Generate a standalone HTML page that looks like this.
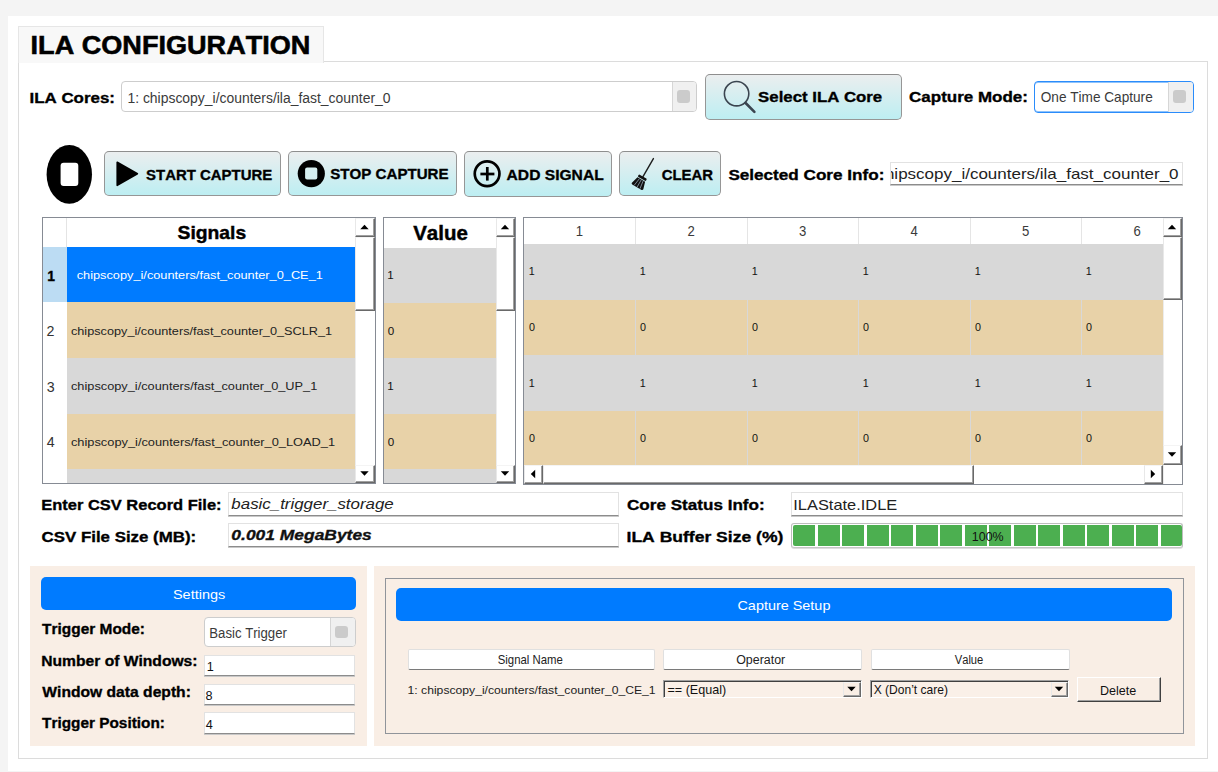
<!DOCTYPE html>
<html><head><meta charset="utf-8"><title>ILA Configuration</title>
<style>
html,body{margin:0;padding:0;}
body{width:1218px;height:772px;position:relative;overflow:hidden;background:#f4f4f4;font-family:"Liberation Sans",sans-serif;}
svg text{font-family:"Liberation Sans",sans-serif;font-kerning:none;white-space:pre;}
</style></head><body>
<div style="position:absolute;left:8px;top:16px;width:1210px;height:755px;background:#fff"></div>
<div style="position:absolute;left:18px;top:61px;width:1190px;height:698px;border:1px solid #dcdcdc;box-sizing:border-box"></div>
<div style="position:absolute;left:18px;top:26px;width:306px;height:37px;background:#f8f8f8;border:1px solid #e6e6e6;border-bottom:none;box-sizing:border-box"></div>
<div style="position:absolute;left:121px;top:81px;width:576px;height:31px;background:#fff;border:1px solid #cdcdcd;border-radius:4px;box-sizing:border-box;overflow:hidden"></div>
<div style="position:absolute;left:672px;top:82px;width:24px;height:29px;background:#f0f0f0;border-left:1px solid #d6d6d6;border-radius:0 3px 3px 0;box-sizing:border-box"></div>
<div style="position:absolute;left:677px;top:90px;width:13px;height:13px;background:#cbcbcb;border-radius:3px"></div>
<div style="position:absolute;left:705px;top:74px;width:197px;height:46px;background:linear-gradient(#ebeeef,#bdeef2);border:1px solid #969696;border-top-color:#8e8e8e;border-radius:5px;box-sizing:border-box"></div>
<svg style="position:absolute;left:0;top:0" width="1218" height="200"><circle cx="736.6" cy="93.7" r="12.2" fill="none" stroke="#3b4550" stroke-width="1.6"/><line x1="745.6" y1="103" x2="754.4" y2="111.8" stroke="#3b4550" stroke-width="2.6" stroke-linecap="round"/></svg>
<div style="position:absolute;left:1034px;top:81px;width:160px;height:32px;background:#fff;border:1px solid #2a8cfb;box-shadow:inset 0 1px 0 #8fc3fb,inset 0 -1px 0 #8fc3fb;border-radius:4px;box-sizing:border-box;overflow:hidden"></div>
<div style="position:absolute;left:1168px;top:82px;width:25px;height:30px;background:#f0f0f0;border-left:1px solid #d6d6d6;border-radius:0 3px 3px 0;box-sizing:border-box"></div>
<div style="position:absolute;left:1173px;top:90px;width:13px;height:13px;background:#cbcbcb;border-radius:3px"></div>
<svg style="position:absolute;left:0;top:0" width="1218" height="210">
<ellipse cx="69.3" cy="174.4" rx="22.7" ry="29.3" fill="#000"/>
<rect x="60.6" y="162.7" width="17.7" height="23.3" rx="3" fill="#fff"/>
</svg>
<div style="position:absolute;left:104px;top:151px;width:177px;height:45px;background:linear-gradient(#ebeeef,#bdeef2);border:1px solid #969696;border-top-color:#8e8e8e;border-radius:5px;box-sizing:border-box"></div>
<div style="position:absolute;left:288px;top:151px;width:169px;height:45px;background:linear-gradient(#ebeeef,#bdeef2);border:1px solid #969696;border-top-color:#8e8e8e;border-radius:5px;box-sizing:border-box"></div>
<div style="position:absolute;left:464px;top:151px;width:148px;height:46px;background:linear-gradient(#ebeeef,#bdeef2);border:1px solid #969696;border-top-color:#8e8e8e;border-radius:5px;box-sizing:border-box"></div>
<div style="position:absolute;left:619px;top:151px;width:102px;height:45px;background:linear-gradient(#ebeeef,#bdeef2);border:1px solid #969696;border-top-color:#8e8e8e;border-radius:5px;box-sizing:border-box"></div>
<svg style="position:absolute;left:0;top:0" width="1218" height="210">
<path d="M117.2 162.2 L137.4 173.7 L117.2 185.3 Z" fill="#000" stroke="#000" stroke-width="1.6" stroke-linejoin="round"/>
<circle cx="311.3" cy="173.6" r="13.6" fill="#000"/>
<rect x="305.1" y="167.4" width="12.2" height="12.2" rx="2" fill="#d6eef0"/>
<circle cx="487.1" cy="173.75" r="12.35" fill="none" stroke="#000" stroke-width="2.7"/>
<line x1="480.4" y1="174" x2="494.4" y2="174" stroke="#000" stroke-width="2.7"/>
<line x1="487.3" y1="167" x2="487.3" y2="180.6" stroke="#000" stroke-width="2.7"/>
<g transform="translate(642.2 178) rotate(30)">
<line x1="0" y1="-22.4" x2="0" y2="-1" stroke="#1e1e1e" stroke-width="1.4" stroke-linecap="round"/>
<rect x="-4.6" y="-1.6" width="9.2" height="2.6" rx="0.8" fill="#111"/>
<path d="M-4.4 1.8 L4.4 1.8 L6.6 9.2 Q6.6 10.6 5.4 10.6 L-5.4 10.6 Q-6.6 10.6 -6.6 9.2 Z" fill="#111"/>
<path d="M-2.1 2.2 L-3.3 10.4 M0.1 2.2 L0.1 10.4 M2.3 2.2 L3.4 10.4" stroke="#9ab" stroke-width="0.7"/>
</g>
</svg>
<div style="position:absolute;left:890px;top:162px;width:293px;height:23px;background:#fff;border:1px solid #e2e2e2;border-bottom:1px solid #8c8c8c;box-sizing:border-box;box-shadow:0 1px 0 #c8c8c8"></div>
<div style="position:absolute;left:42px;top:217px;width:334px;height:267px;border:1px solid #868b94;background:#fff;box-sizing:border-box"></div>
<div style="position:absolute;left:66px;top:218px;width:1px;height:29px;background:#e4e4e4"></div>
<div style="position:absolute;left:67px;top:247px;width:288px;height:55px;background:#007bff"></div>
<div style="position:absolute;left:67px;top:302px;width:288px;height:56px;background:#e8d2a8"></div>
<div style="position:absolute;left:67px;top:358px;width:288px;height:56px;background:#d8d8d8"></div>
<div style="position:absolute;left:67px;top:414px;width:288px;height:55px;background:#e8d2a8"></div>
<div style="position:absolute;left:67px;top:469px;width:288px;height:14px;background:#d8d8d8"></div>
<div style="position:absolute;left:43px;top:247px;width:24px;height:55px;background:#bcdcf3"></div>
<div style="position:absolute;left:355px;top:218px;width:1px;height:265px;background:#ececec"></div>
<div style="position:absolute;left:355px;top:218px;width:20px;height:19px;background:#fff;border-left:1px solid #e8e8e8;border-top:1px solid #f4f4f4;border-right:1px solid #696969;border-bottom:1px solid #696969;box-shadow:inset -1px -1px 0 #a0a0a0;box-sizing:border-box"></div>
<div style="position:absolute;left:355px;top:237px;width:20px;height:74px;background:#fff;border-left:1px solid #e8e8e8;border-top:1px solid #f4f4f4;border-right:1px solid #696969;border-bottom:1px solid #696969;box-shadow:inset -1px -1px 0 #a0a0a0;box-sizing:border-box"></div>
<div style="position:absolute;left:355px;top:465px;width:20px;height:18px;background:#fff;border-left:1px solid #e8e8e8;border-top:1px solid #f4f4f4;border-right:1px solid #696969;border-bottom:1px solid #696969;box-shadow:inset -1px -1px 0 #a0a0a0;box-sizing:border-box"></div>
<div style="position:absolute;left:383px;top:217px;width:133px;height:267px;border:1px solid #868b94;background:#fff;box-sizing:border-box"></div>
<div style="position:absolute;left:384px;top:248px;width:112px;height:55px;background:#d8d8d8"></div>
<div style="position:absolute;left:384px;top:303px;width:112px;height:55px;background:#e8d2a8"></div>
<div style="position:absolute;left:384px;top:358px;width:112px;height:56px;background:#d8d8d8"></div>
<div style="position:absolute;left:384px;top:414px;width:112px;height:55px;background:#e8d2a8"></div>
<div style="position:absolute;left:384px;top:469px;width:112px;height:14px;background:#d8d8d8"></div>
<div style="position:absolute;left:496px;top:218px;width:1px;height:265px;background:#ececec"></div>
<div style="position:absolute;left:496px;top:218px;width:19px;height:19px;background:#fff;border-left:1px solid #e8e8e8;border-top:1px solid #f4f4f4;border-right:1px solid #696969;border-bottom:1px solid #696969;box-shadow:inset -1px -1px 0 #a0a0a0;box-sizing:border-box"></div>
<div style="position:absolute;left:496px;top:237px;width:19px;height:74px;background:#fff;border-left:1px solid #e8e8e8;border-top:1px solid #f4f4f4;border-right:1px solid #696969;border-bottom:1px solid #696969;box-shadow:inset -1px -1px 0 #a0a0a0;box-sizing:border-box"></div>
<div style="position:absolute;left:496px;top:465px;width:19px;height:18px;background:#fff;border-left:1px solid #e8e8e8;border-top:1px solid #f4f4f4;border-right:1px solid #696969;border-bottom:1px solid #696969;box-shadow:inset -1px -1px 0 #a0a0a0;box-sizing:border-box"></div>
<div style="position:absolute;left:523px;top:217px;width:660px;height:268px;border:1px solid #868b94;background:#fff;box-sizing:border-box"></div>
<div style="position:absolute;left:524px;top:244px;width:639px;height:56px;background:#d8d8d8"></div>
<div style="position:absolute;left:524px;top:300px;width:639px;height:55px;background:#e8d2a8"></div>
<div style="position:absolute;left:524px;top:355px;width:639px;height:56px;background:#d8d8d8"></div>
<div style="position:absolute;left:524px;top:411px;width:639px;height:54px;background:#e8d2a8"></div>
<div style="position:absolute;left:635px;top:218px;width:1px;height:26px;background:#e5e5e5"></div>
<div style="position:absolute;left:635px;top:244px;width:1px;height:221px;background:#d8d8d8"></div>
<div style="position:absolute;left:747px;top:218px;width:1px;height:26px;background:#e5e5e5"></div>
<div style="position:absolute;left:747px;top:244px;width:1px;height:221px;background:#d8d8d8"></div>
<div style="position:absolute;left:858px;top:218px;width:1px;height:26px;background:#e5e5e5"></div>
<div style="position:absolute;left:858px;top:244px;width:1px;height:221px;background:#d8d8d8"></div>
<div style="position:absolute;left:970px;top:218px;width:1px;height:26px;background:#e5e5e5"></div>
<div style="position:absolute;left:970px;top:244px;width:1px;height:221px;background:#d8d8d8"></div>
<div style="position:absolute;left:1081px;top:218px;width:1px;height:26px;background:#e5e5e5"></div>
<div style="position:absolute;left:1081px;top:244px;width:1px;height:221px;background:#d8d8d8"></div>
<div style="position:absolute;left:1163px;top:218px;width:1px;height:247px;background:#ececec"></div>
<div style="position:absolute;left:1163px;top:218px;width:19px;height:19px;background:#fff;border-left:1px solid #e8e8e8;border-top:1px solid #f4f4f4;border-right:1px solid #696969;border-bottom:1px solid #696969;box-shadow:inset -1px -1px 0 #a0a0a0;box-sizing:border-box"></div>
<div style="position:absolute;left:1163px;top:237px;width:19px;height:63px;background:#fff;border-left:1px solid #e8e8e8;border-top:1px solid #f4f4f4;border-right:1px solid #696969;border-bottom:1px solid #696969;box-shadow:inset -1px -1px 0 #a0a0a0;box-sizing:border-box"></div>
<div style="position:absolute;left:1163px;top:445px;width:19px;height:20px;background:#fff;border-left:1px solid #e8e8e8;border-top:1px solid #f4f4f4;border-right:1px solid #696969;border-bottom:1px solid #696969;box-shadow:inset -1px -1px 0 #a0a0a0;box-sizing:border-box"></div>
<div style="position:absolute;left:524px;top:465px;width:639px;height:19px;background:#fff"></div>
<div style="position:absolute;left:524px;top:465px;width:19px;height:19px;background:#fff;border-left:1px solid #e8e8e8;border-top:1px solid #f4f4f4;border-right:1px solid #696969;border-bottom:1px solid #696969;box-shadow:inset -1px -1px 0 #a0a0a0;box-sizing:border-box"></div>
<div style="position:absolute;left:543px;top:465px;width:431px;height:19px;background:#fff;border-left:1px solid #e8e8e8;border-top:1px solid #f4f4f4;border-right:1px solid #696969;border-bottom:1px solid #696969;box-shadow:inset -1px -1px 0 #a0a0a0;box-sizing:border-box"></div>
<div style="position:absolute;left:1144px;top:465px;width:19px;height:19px;background:#fff;border-left:1px solid #e8e8e8;border-top:1px solid #f4f4f4;border-right:1px solid #696969;border-bottom:1px solid #696969;box-shadow:inset -1px -1px 0 #a0a0a0;box-sizing:border-box"></div>
<div style="position:absolute;left:1163px;top:465px;width:19px;height:19px;background:#fff;border-left:1px solid #ececec;box-sizing:border-box"></div>
<div style="position:absolute;left:228px;top:492px;width:391px;height:24px;background:#fff;border:1px solid #e2e2e2;border-bottom:1px solid #8c8c8c;box-sizing:border-box;box-shadow:0 1px 0 #c8c8c8"></div>
<div style="position:absolute;left:228px;top:523px;width:391px;height:24px;background:#fff;border:1px solid #e2e2e2;border-bottom:1px solid #8c8c8c;box-sizing:border-box;box-shadow:0 1px 0 #c8c8c8"></div>
<div style="position:absolute;left:791px;top:492px;width:392px;height:24px;background:#fff;border:1px solid #e2e2e2;border-bottom:1px solid #8c8c8c;box-sizing:border-box;box-shadow:0 1px 0 #c8c8c8"></div>
<div style="position:absolute;left:791px;top:523px;width:392px;height:25px;background:#fff;border:1px solid #bdbdbd;border-bottom-color:#c6c6c6;border-radius:3px;box-sizing:border-box;box-shadow:0 1px 0 #dedede"></div>
<div style="position:absolute;left:793.0px;top:525px;width:22.100000000000023px;height:21px;background:#4caf50;border-radius:2px 0 0 2px"></div>
<div style="position:absolute;left:817.5px;top:525px;width:22.100000000000023px;height:21px;background:#4caf50"></div>
<div style="position:absolute;left:842.1px;top:525px;width:22.100000000000023px;height:21px;background:#4caf50"></div>
<div style="position:absolute;left:866.6px;top:525px;width:22.100000000000023px;height:21px;background:#4caf50"></div>
<div style="position:absolute;left:891.1px;top:525px;width:22.100000000000023px;height:21px;background:#4caf50"></div>
<div style="position:absolute;left:915.6px;top:525px;width:22.199999999999932px;height:21px;background:#4caf50"></div>
<div style="position:absolute;left:940.2px;top:525px;width:22.09999999999991px;height:21px;background:#4caf50"></div>
<div style="position:absolute;left:964.7px;top:525px;width:22.09999999999991px;height:21px;background:#4caf50"></div>
<div style="position:absolute;left:989.2px;top:525px;width:22.09999999999991px;height:21px;background:#4caf50"></div>
<div style="position:absolute;left:1013.8px;top:525px;width:22.100000000000136px;height:21px;background:#4caf50"></div>
<div style="position:absolute;left:1038.3px;top:525px;width:22.100000000000136px;height:21px;background:#4caf50"></div>
<div style="position:absolute;left:1062.8px;top:525px;width:22.100000000000136px;height:21px;background:#4caf50"></div>
<div style="position:absolute;left:1087.4px;top:525px;width:22.09999999999991px;height:21px;background:#4caf50"></div>
<div style="position:absolute;left:1111.9px;top:525px;width:22.09999999999991px;height:21px;background:#4caf50"></div>
<div style="position:absolute;left:1136.4px;top:525px;width:22.09999999999991px;height:21px;background:#4caf50"></div>
<div style="position:absolute;left:1161.0px;top:525px;width:21.0px;height:21px;background:#4caf50;border-radius:0 2px 2px 0"></div>
<div style="position:absolute;left:30px;top:566px;width:337px;height:180px;background:#f9eee5"></div>
<div style="position:absolute;left:374px;top:566px;width:821px;height:180px;background:#f9eee5"></div>
<div style="position:absolute;left:41px;top:577px;width:315px;height:33px;background:#007bff;border-radius:5px"></div>
<div style="position:absolute;left:203.5px;top:617px;width:152.0px;height:30px;background:#fff;border:1px solid #cdcdcd;border-radius:4px;box-sizing:border-box;overflow:hidden"></div>
<div style="position:absolute;left:329.5px;top:618px;width:25.0px;height:28px;background:#f0f0f0;border-left:1px solid #d6d6d6;border-radius:0 3px 3px 0;box-sizing:border-box"></div>
<div style="position:absolute;left:334.8px;top:625.6px;width:13.199999999999989px;height:12.899999999999977px;background:#cbcbcb;border-radius:3px"></div>
<div style="position:absolute;left:204px;top:655px;width:151px;height:21px;background:#fff;border:1px solid #e2e2e2;border-bottom:1px solid #8c8c8c;box-sizing:border-box;box-shadow:0 1px 0 #c8c8c8"></div>
<div style="position:absolute;left:204px;top:684px;width:151px;height:21px;background:#fff;border:1px solid #e2e2e2;border-bottom:1px solid #8c8c8c;box-sizing:border-box;box-shadow:0 1px 0 #c8c8c8"></div>
<div style="position:absolute;left:204px;top:712px;width:151px;height:22px;background:#fff;border:1px solid #e2e2e2;border-bottom:1px solid #8c8c8c;box-sizing:border-box;box-shadow:0 1px 0 #c8c8c8"></div>
<div style="position:absolute;left:385px;top:578px;width:799px;height:156px;border:1px solid #90949a;box-sizing:border-box"></div>
<div style="position:absolute;left:396px;top:588px;width:776px;height:33px;background:#007bff;border-radius:5px"></div>
<div style="position:absolute;left:408px;top:649px;width:247px;height:21px;background:#fff;border:1px solid #e0e0e0;border-bottom:1px solid #7a7a7a;border-radius:2px;box-sizing:border-box"></div>
<div style="position:absolute;left:663px;top:649px;width:199px;height:21px;background:#fff;border:1px solid #e0e0e0;border-bottom:1px solid #7a7a7a;border-radius:2px;box-sizing:border-box"></div>
<div style="position:absolute;left:871px;top:649px;width:199px;height:21px;background:#fff;border:1px solid #e0e0e0;border-bottom:1px solid #7a7a7a;border-radius:2px;box-sizing:border-box"></div>
<div style="position:absolute;left:663px;top:680px;width:199px;height:18px;background:#faf0e8;border-top:1px solid #a0a0a0;border-left:1px solid #a0a0a0;border-right:1px solid #fff;border-bottom:1px solid #fff;box-shadow:inset 1px 1px 0 #404040;box-sizing:border-box"></div>
<div style="position:absolute;left:843px;top:682px;width:18px;height:15px;background:#f9eee5;border-left:1px solid #e8e8e8;border-top:1px solid #f4f4f4;border-right:1px solid #696969;border-bottom:1px solid #696969;box-shadow:inset -1px -1px 0 #a0a0a0;box-sizing:border-box"></div>
<div style="position:absolute;left:870px;top:680px;width:199px;height:18px;background:#faf0e8;border-top:1px solid #a0a0a0;border-left:1px solid #a0a0a0;border-right:1px solid #fff;border-bottom:1px solid #fff;box-shadow:inset 1px 1px 0 #404040;box-sizing:border-box"></div>
<div style="position:absolute;left:1051px;top:682px;width:17px;height:15px;background:#f9eee5;border-left:1px solid #e8e8e8;border-top:1px solid #f4f4f4;border-right:1px solid #696969;border-bottom:1px solid #696969;box-shadow:inset -1px -1px 0 #a0a0a0;box-sizing:border-box"></div>
<div style="position:absolute;left:1077px;top:677px;width:84px;height:25px;background:#f9eee5;border-top:1px solid #fff;border-left:1px solid #fff;border-right:1px solid #404040;border-bottom:1px solid #404040;box-shadow:inset -1px -1px 0 #a0a0a0;box-sizing:border-box"></div>
<svg width="1218" height="772" viewBox="0 0 1218 772" style="position:absolute;left:0;top:0;">
<text x="30.59" y="53.50" font-size="26.45" font-weight="bold" font-style="normal" fill="#000" textLength="279.84" lengthAdjust="spacingAndGlyphs"  stroke="#000" stroke-width="0.58">ILA CONFIGURATION</text>
<text x="29.47" y="102.50" font-size="14.97" font-weight="bold" font-style="normal" fill="#000" textLength="85.46" lengthAdjust="spacingAndGlyphs"  stroke="#000" stroke-width="0.33">ILA Cores:</text>
<text x="127.44" y="103.00" font-size="13.81" font-weight="normal" font-style="normal" fill="#3a3a3a" textLength="263.10" lengthAdjust="spacingAndGlyphs" >1: chipscopy_i/counters/ila_fast_counter_0</text>
<text x="758.12" y="102.40" font-size="14.83" font-weight="bold" font-style="normal" fill="#000" textLength="124.06" lengthAdjust="spacingAndGlyphs"  stroke="#000" stroke-width="0.33">Select ILA Core</text>
<text x="909.10" y="102.40" font-size="14.83" font-weight="bold" font-style="normal" fill="#000" textLength="118.83" lengthAdjust="spacingAndGlyphs"  stroke="#000" stroke-width="0.33">Capture Mode:</text>
<text x="1040.76" y="102.40" font-size="14.54" font-weight="normal" font-style="normal" fill="#3a3a3a" textLength="111.95" lengthAdjust="spacingAndGlyphs" >One Time Capture</text>
<text x="146.07" y="179.70" font-size="15.26" font-weight="bold" font-style="normal" fill="#000" textLength="126.11" lengthAdjust="spacingAndGlyphs"  stroke="#000" stroke-width="0.34">START CAPTURE</text>
<text x="330.26" y="179.40" font-size="14.97" font-weight="bold" font-style="normal" fill="#000" textLength="118.33" lengthAdjust="spacingAndGlyphs"  stroke="#000" stroke-width="0.33">STOP CAPTURE</text>
<text x="506.61" y="179.50" font-size="14.54" font-weight="bold" font-style="normal" fill="#000" textLength="97.07" lengthAdjust="spacingAndGlyphs"  stroke="#000" stroke-width="0.32">ADD SIGNAL</text>
<text x="661.69" y="179.70" font-size="14.83" font-weight="bold" font-style="normal" fill="#000" textLength="51.32" lengthAdjust="spacingAndGlyphs"  stroke="#000" stroke-width="0.33">CLEAR</text>
<text x="728.41" y="180.30" font-size="15.12" font-weight="bold" font-style="normal" fill="#000" textLength="155.94" lengthAdjust="spacingAndGlyphs"  stroke="#000" stroke-width="0.33">Selected Core Info:</text>
<clipPath id="c1"><rect x="891" y="163" width="290" height="21"/></clipPath>
<text clip-path="url(#c1)" x="876.43" y="179.2" font-size="15.55" fill="#222" textLength="302.14" lengthAdjust="spacingAndGlyphs">chipscopy_i/counters/ila_fast_counter_0</text>
<path d="M360.3 229.2 L368.7 229.2 L364.5 224.8 Z" fill="#000"/>
<path d="M360.3 471.3 L368.7 471.3 L364.5 475.7 Z" fill="#000"/>
<text x="177.54" y="239.10" font-size="19.04" font-weight="bold" font-style="normal" fill="#000" textLength="68.65" lengthAdjust="spacingAndGlyphs"  stroke="#000" stroke-width="0.42">Signals</text>
<text x="47.22" y="280.80" font-size="13.95" font-weight="bold" font-style="normal" fill="#000" textLength="7.76" lengthAdjust="spacingAndGlyphs"  stroke="#000" stroke-width="0.31">1</text>
<text x="46.48" y="336.40" font-size="14.24" font-weight="normal" font-style="normal" fill="#333" textLength="7.92" lengthAdjust="spacingAndGlyphs" >2</text>
<text x="46.66" y="391.60" font-size="14.24" font-weight="normal" font-style="normal" fill="#333" textLength="7.92" lengthAdjust="spacingAndGlyphs" >3</text>
<text x="46.87" y="447.30" font-size="14.24" font-weight="normal" font-style="normal" fill="#333" textLength="7.92" lengthAdjust="spacingAndGlyphs" >4</text>
<text x="76.66" y="278.50" font-size="10.47" font-weight="normal" font-style="normal" fill="#fff" textLength="246.17" lengthAdjust="spacingAndGlyphs" >chipscopy_i/counters/fast_counter_0_CE_1</text>
<text x="70.96" y="334.70" font-size="10.47" font-weight="normal" font-style="normal" fill="#222" textLength="261.06" lengthAdjust="spacingAndGlyphs" >chipscopy_i/counters/fast_counter_0_SCLR_1</text>
<text x="70.96" y="390.20" font-size="10.47" font-weight="normal" font-style="normal" fill="#222" textLength="246.37" lengthAdjust="spacingAndGlyphs" >chipscopy_i/counters/fast_counter_0_UP_1</text>
<text x="70.96" y="445.80" font-size="10.47" font-weight="normal" font-style="normal" fill="#222" textLength="264.17" lengthAdjust="spacingAndGlyphs" >chipscopy_i/counters/fast_counter_0_LOAD_1</text>
<path d="M500.8 229.2 L509.2 229.2 L505.0 224.8 Z" fill="#000"/>
<path d="M500.8 471.3 L509.2 471.3 L505.0 475.7 Z" fill="#000"/>
<text x="413.16" y="239.60" font-size="19.77" font-weight="bold" font-style="normal" fill="#000" textLength="54.64" lengthAdjust="spacingAndGlyphs"  stroke="#000" stroke-width="0.43">Value</text>
<text x="387.31" y="278.90" font-size="11.63" font-weight="normal" font-style="normal" fill="#111" textLength="6.47" lengthAdjust="spacingAndGlyphs" >1</text>
<text x="387.75" y="334.60" font-size="11.63" font-weight="normal" font-style="normal" fill="#111" textLength="6.47" lengthAdjust="spacingAndGlyphs" >0</text>
<text x="387.31" y="390.30" font-size="11.63" font-weight="normal" font-style="normal" fill="#111" textLength="6.47" lengthAdjust="spacingAndGlyphs" >1</text>
<text x="387.75" y="445.80" font-size="11.63" font-weight="normal" font-style="normal" fill="#111" textLength="6.47" lengthAdjust="spacingAndGlyphs" >0</text>
<text x="575.77" y="236.40" font-size="15.12" font-weight="normal" font-style="normal" fill="#3a3a3a" textLength="7.31" lengthAdjust="spacingAndGlyphs" >1</text>
<text x="528.68" y="275.40" font-size="10.76" font-weight="normal" font-style="normal" fill="#111" textLength="5.98" lengthAdjust="spacingAndGlyphs" >1</text>
<text x="529.08" y="330.80" font-size="10.76" font-weight="normal" font-style="normal" fill="#111" textLength="5.98" lengthAdjust="spacingAndGlyphs" >0</text>
<text x="528.68" y="386.60" font-size="10.76" font-weight="normal" font-style="normal" fill="#111" textLength="5.98" lengthAdjust="spacingAndGlyphs" >1</text>
<text x="529.08" y="442.00" font-size="10.76" font-weight="normal" font-style="normal" fill="#111" textLength="5.98" lengthAdjust="spacingAndGlyphs" >0</text>
<text x="687.46" y="236.40" font-size="15.12" font-weight="normal" font-style="normal" fill="#3a3a3a" textLength="7.31" lengthAdjust="spacingAndGlyphs" >2</text>
<text x="639.68" y="275.40" font-size="10.76" font-weight="normal" font-style="normal" fill="#111" textLength="5.98" lengthAdjust="spacingAndGlyphs" >1</text>
<text x="640.08" y="330.80" font-size="10.76" font-weight="normal" font-style="normal" fill="#111" textLength="5.98" lengthAdjust="spacingAndGlyphs" >0</text>
<text x="639.68" y="386.60" font-size="10.76" font-weight="normal" font-style="normal" fill="#111" textLength="5.98" lengthAdjust="spacingAndGlyphs" >1</text>
<text x="640.08" y="442.00" font-size="10.76" font-weight="normal" font-style="normal" fill="#111" textLength="5.98" lengthAdjust="spacingAndGlyphs" >0</text>
<text x="799.00" y="236.40" font-size="15.12" font-weight="normal" font-style="normal" fill="#3a3a3a" textLength="7.31" lengthAdjust="spacingAndGlyphs" >3</text>
<text x="751.68" y="275.40" font-size="10.76" font-weight="normal" font-style="normal" fill="#111" textLength="5.98" lengthAdjust="spacingAndGlyphs" >1</text>
<text x="752.08" y="330.80" font-size="10.76" font-weight="normal" font-style="normal" fill="#111" textLength="5.98" lengthAdjust="spacingAndGlyphs" >0</text>
<text x="751.68" y="386.60" font-size="10.76" font-weight="normal" font-style="normal" fill="#111" textLength="5.98" lengthAdjust="spacingAndGlyphs" >1</text>
<text x="752.08" y="442.00" font-size="10.76" font-weight="normal" font-style="normal" fill="#111" textLength="5.98" lengthAdjust="spacingAndGlyphs" >0</text>
<text x="910.51" y="236.40" font-size="15.12" font-weight="normal" font-style="normal" fill="#3a3a3a" textLength="7.31" lengthAdjust="spacingAndGlyphs" >4</text>
<text x="862.68" y="275.40" font-size="10.76" font-weight="normal" font-style="normal" fill="#111" textLength="5.98" lengthAdjust="spacingAndGlyphs" >1</text>
<text x="863.08" y="330.80" font-size="10.76" font-weight="normal" font-style="normal" fill="#111" textLength="5.98" lengthAdjust="spacingAndGlyphs" >0</text>
<text x="862.68" y="386.60" font-size="10.76" font-weight="normal" font-style="normal" fill="#111" textLength="5.98" lengthAdjust="spacingAndGlyphs" >1</text>
<text x="863.08" y="442.00" font-size="10.76" font-weight="normal" font-style="normal" fill="#111" textLength="5.98" lengthAdjust="spacingAndGlyphs" >0</text>
<text x="1021.98" y="236.40" font-size="15.12" font-weight="normal" font-style="normal" fill="#3a3a3a" textLength="7.31" lengthAdjust="spacingAndGlyphs" >5</text>
<text x="974.68" y="275.40" font-size="10.76" font-weight="normal" font-style="normal" fill="#111" textLength="5.98" lengthAdjust="spacingAndGlyphs" >1</text>
<text x="975.08" y="330.80" font-size="10.76" font-weight="normal" font-style="normal" fill="#111" textLength="5.98" lengthAdjust="spacingAndGlyphs" >0</text>
<text x="974.68" y="386.60" font-size="10.76" font-weight="normal" font-style="normal" fill="#111" textLength="5.98" lengthAdjust="spacingAndGlyphs" >1</text>
<text x="975.08" y="442.00" font-size="10.76" font-weight="normal" font-style="normal" fill="#111" textLength="5.98" lengthAdjust="spacingAndGlyphs" >0</text>
<text x="1133.41" y="236.40" font-size="15.12" font-weight="normal" font-style="normal" fill="#3a3a3a" textLength="7.31" lengthAdjust="spacingAndGlyphs" >6</text>
<text x="1085.68" y="275.40" font-size="10.76" font-weight="normal" font-style="normal" fill="#111" textLength="5.98" lengthAdjust="spacingAndGlyphs" >1</text>
<text x="1086.08" y="330.80" font-size="10.76" font-weight="normal" font-style="normal" fill="#111" textLength="5.98" lengthAdjust="spacingAndGlyphs" >0</text>
<text x="1085.68" y="386.60" font-size="10.76" font-weight="normal" font-style="normal" fill="#111" textLength="5.98" lengthAdjust="spacingAndGlyphs" >1</text>
<text x="1086.08" y="442.00" font-size="10.76" font-weight="normal" font-style="normal" fill="#111" textLength="5.98" lengthAdjust="spacingAndGlyphs" >0</text>
<path d="M1167.8 229.2 L1176.2 229.2 L1172.0 224.8 Z" fill="#000"/>
<path d="M1167.8 452.3 L1176.2 452.3 L1172.0 456.7 Z" fill="#000"/>
<path d="M535.2 469.8 L535.2 478.2 L530.8 474.0 Z" fill="#000"/>
<path d="M1150.8 469.8 L1150.8 478.2 L1155.2 474.0 Z" fill="#000"/>
<text x="41.20" y="509.60" font-size="14.97" font-weight="bold" font-style="normal" fill="#000" textLength="180.39" lengthAdjust="spacingAndGlyphs"  stroke="#000" stroke-width="0.33">Enter CSV Record File:</text>
<text x="231.36" y="509.40" font-size="15.41" font-weight="normal" font-style="italic" fill="#222" textLength="162.37" lengthAdjust="spacingAndGlyphs" >basic_trigger_storage</text>
<text x="41.61" y="542.00" font-size="14.83" font-weight="bold" font-style="normal" fill="#000" textLength="154.51" lengthAdjust="spacingAndGlyphs"  stroke="#000" stroke-width="0.33">CSV File Size (MB):</text>
<text x="231.38" y="540.40" font-size="13.95" font-weight="bold" font-style="italic" fill="#111" textLength="140.42" lengthAdjust="spacingAndGlyphs"  stroke="#111" stroke-width="0.31">0.001 MegaBytes</text>
<text x="627.00" y="509.90" font-size="14.83" font-weight="bold" font-style="normal" fill="#000" textLength="137.64" lengthAdjust="spacingAndGlyphs"  stroke="#000" stroke-width="0.33">Core Status Info:</text>
<text x="626.53" y="541.50" font-size="14.68" font-weight="bold" font-style="normal" fill="#000" textLength="156.85" lengthAdjust="spacingAndGlyphs"  stroke="#000" stroke-width="0.32">ILA Buffer Size (%)</text>
<text x="793.29" y="509.50" font-size="15.12" font-weight="normal" font-style="normal" fill="#222" textLength="103.92" lengthAdjust="spacingAndGlyphs" >ILAState.IDLE</text>
<text x="971.85" y="540.60" font-size="12.50" font-weight="normal" font-style="normal" fill="#111" textLength="31.79" lengthAdjust="spacingAndGlyphs" >100%</text>
<text x="172.94" y="598.50" font-size="13.08" font-weight="normal" font-style="normal" fill="#fff" textLength="52.28" lengthAdjust="spacingAndGlyphs" >Settings</text>
<text x="42.13" y="634.40" font-size="14.97" font-weight="bold" font-style="normal" fill="#000" textLength="102.86" lengthAdjust="spacingAndGlyphs"  stroke="#000" stroke-width="0.33">Trigger Mode:</text>
<text x="209.32" y="637.70" font-size="13.95" font-weight="normal" font-style="normal" fill="#3a3a3a" textLength="77.60" lengthAdjust="spacingAndGlyphs" >Basic Trigger</text>
<text x="41.25" y="665.60" font-size="14.97" font-weight="bold" font-style="normal" fill="#000" textLength="156.25" lengthAdjust="spacingAndGlyphs"  stroke="#000" stroke-width="0.33">Number of Windows:</text>
<text x="206.64" y="670.90" font-size="12.65" font-weight="normal" font-style="normal" fill="#111" textLength="7.03" lengthAdjust="spacingAndGlyphs" >1</text>
<text x="42.28" y="696.90" font-size="14.97" font-weight="bold" font-style="normal" fill="#000" textLength="148.62" lengthAdjust="spacingAndGlyphs"  stroke="#000" stroke-width="0.33">Window data depth:</text>
<text x="205.45" y="699.90" font-size="12.65" font-weight="normal" font-style="normal" fill="#111" textLength="7.03" lengthAdjust="spacingAndGlyphs" >8</text>
<text x="42.13" y="728.10" font-size="14.97" font-weight="bold" font-style="normal" fill="#000" textLength="122.75" lengthAdjust="spacingAndGlyphs"  stroke="#000" stroke-width="0.33">Trigger Position:</text>
<text x="205.71" y="728.90" font-size="12.65" font-weight="normal" font-style="normal" fill="#111" textLength="7.03" lengthAdjust="spacingAndGlyphs" >4</text>
<text x="737.47" y="609.50" font-size="12.79" font-weight="normal" font-style="normal" fill="#fff" textLength="92.94" lengthAdjust="spacingAndGlyphs" >Capture Setup</text>
<text x="497.78" y="664.30" font-size="12.79" font-weight="normal" font-style="normal" fill="#222" textLength="65.02" lengthAdjust="spacingAndGlyphs" >Signal Name</text>
<text x="736.21" y="664.00" font-size="12.50" font-weight="normal" font-style="normal" fill="#222" textLength="48.99" lengthAdjust="spacingAndGlyphs" >Operator</text>
<text x="954.75" y="664.00" font-size="12.50" font-weight="normal" font-style="normal" fill="#222" textLength="28.54" lengthAdjust="spacingAndGlyphs" >Value</text>
<text x="407.57" y="694.20" font-size="11.05" font-weight="normal" font-style="normal" fill="#222" textLength="248.02" lengthAdjust="spacingAndGlyphs" >1: chipscopy_i/counters/fast_counter_0_CE_1</text>
<path d="M847.3 686.8 L855.7 686.8 L851.5 691.2 Z" fill="#000"/>
<path d="M1054.8 686.8 L1063.2 686.8 L1059.0 691.2 Z" fill="#000"/>
<text x="667.49" y="694.10" font-size="12.35" font-weight="normal" font-style="normal" fill="#111" textLength="58.69" lengthAdjust="spacingAndGlyphs" >== (Equal)</text>
<text x="873.73" y="694.10" font-size="12.35" font-weight="normal" font-style="normal" fill="#111" textLength="74.22" lengthAdjust="spacingAndGlyphs" >X (Don’t care)</text>
<text x="1099.97" y="694.50" font-size="12.94" font-weight="normal" font-style="normal" fill="#111" textLength="36.29" lengthAdjust="spacingAndGlyphs" >Delete</text>
</svg>
</body></html>
